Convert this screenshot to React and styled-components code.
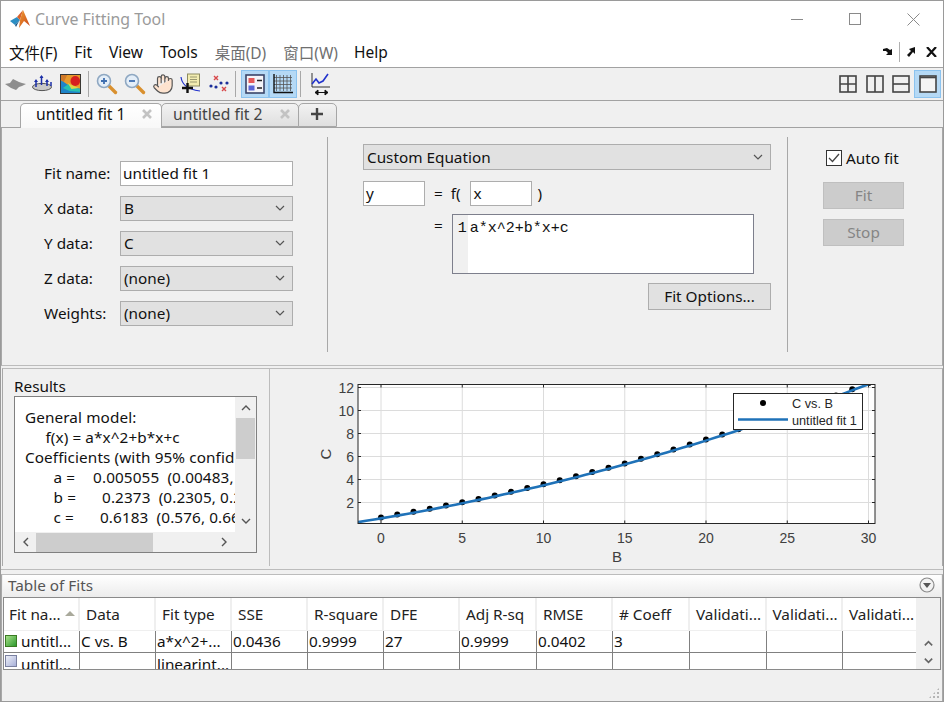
import React from "react";
import styled, { createGlobalStyle } from "styled-components";
import { Hand } from "lucide-react";

const Global = createGlobalStyle`
  * { box-sizing: border-box; }
  html, body { margin: 0; padding: 0; background: #f0f0f0; }
  body { font-family: "Noto Sans", "Noto Sans CJK SC", sans-serif; font-size: 15.3px; color: #111; }
`;

const Window = styled.div`
  width: 944px; height: 702px; overflow: hidden; display: flex; flex-direction: column;
  border: 1px solid #9a9a9a; background: #f0f0f0;
`;
const TitleBar = styled.div`
  height: 36px; flex: none; background: #fff; display: flex; align-items: center; padding-left: 9px; color: #9a9a9a; font-size: 15.9px;
`;
const TitleText = styled.span` margin-left: 4px; `;
const WinControls = styled.div`
  margin-left: auto; display: flex; align-items: center; gap: 45px; padding-right: 23px;
`;
const MenuBar = styled.div`
  height: 30px; flex: none; background: #fff; display: flex; align-items: center; padding: 0 0 0 8px; font-size: 15.5px; color: #111;
`;
const MenuItem = styled.span`
  margin-right: ${p => p.$gap}px; color: ${p => (p.$dim ? "#6f6f6f" : "#111")};
`;
const DockTools = styled.div` margin-left: auto; display: flex; align-items: center; padding-right: 6px; `;
const DockSep = styled.span` width: 1px; height: 20px; background: #b0b0b0; margin: 0 7px 0 5px; `;
const Toolbar = styled.div`
  height: 34px; flex: none; display: flex; align-items: center; padding: 0 2px 0 3px;
  border-top: 1px solid #a2a2a2; border-bottom: 1px solid #a2a2a2; background: #f0f0f0;
`;
const ToolIcon = styled.span`
  width: ${p => p.$w || 28}px; height: 28px; display: flex; align-items: center; justify-content: center; flex: none;
  background: ${p => (p.$on ? "#b5d9f5" : "transparent")};
  border: 1px solid ${p => (p.$on ? "#8cc3ef" : "transparent")};
`;
const ToolSep = styled.span` width: 1px; height: 26px; background: #a8a8a8; margin: 0 ${p => p.$r}px 0 ${p => p.$l}px; flex: none; `;
const RightTools = styled.div` margin-left: auto; display: flex; align-items: center; `;
const TabRow = styled.div`
  height: 27px; flex: none; display: flex; align-items: flex-end; padding-left: 4px; border-bottom: 1px solid #a2a2a2; background: #f0f0f0;
`;
const Grip = styled.span`
  width: 4px; height: 18px; margin: 0 12px 1px 0;
  background-image: radial-gradient(#a0a0a0 45%, transparent 50%); background-size: 2px 2px;
`;
const Tab = styled.div`
  height: ${p => (p.$active ? 25 : 24)}px; width: ${p => p.$w}px; flex: none; display: flex; align-items: center; padding: 0 0 ${p => (p.$active ? 4 : 3)}px ${p => p.$pad}px;
  border: 1px solid #a6a6a6; border-bottom: ${p => (p.$active ? "none" : "1px solid #a6a6a6")}; border-radius: 5px 5px 0 0;
  margin-left: -1px; font-size: 15.7px; color: ${p => (p.$active ? "#111" : "#444")};
  background: ${p => (p.$active ? "linear-gradient(#fff, #f8f8f8)" : "linear-gradient(#f2f2f2, #dfdfdf)")};
  margin-bottom: ${p => (p.$active ? -1 : 0)}px; z-index: ${p => (p.$active ? 1 : 0)};
`;
const TabClose = styled.span` margin-left: auto; margin-right: ${p => p.$r}px; display: flex; `;

const TopPanel = styled.div`
  height: 238px; flex: none; display: flex; padding-left: 1px; border-left: 1px solid #a8a8a8; border-right: 1px solid #a8a8a8;
  border-bottom: 1px solid #bcbcbc;
`;
const FormCol = styled.div`
  width: 324px; padding: 33px 0 0 41px; display: grid; grid-template-columns: 76px 173px; grid-auto-rows: 25px; row-gap: 10px; align-content: start; align-items: center;
`;
const FieldLabel = styled.span` padding-bottom: 2px; `;
const Divider = styled.div` width: 1px; background: #a8a8a8; margin: 9px 0 13px; flex: none; `;
const EditField = styled.div`
  height: 25px; background: #fff; border: 1px solid #adadad; padding: 0 0 2px ${p => p.$pad || 2}px; margin-left: ${p => p.$l || 0}px; display: flex; align-items: center; width: ${p => (p.$w ? p.$w + "px" : "auto")};
`;
const Combo = styled.div`
  height: ${p => p.$h || 25}px; background: #e1e1e1; border: 1px solid #adadad; padding: 0 6px ${p => (p.$h ? 1 : 2)}px 3px; display: flex; align-items: center; justify-content: space-between;
`;
const EqCol = styled.div`
  width: 459px; padding: 16px 16px 0 35px; display: flex; flex-direction: column;
`;
const EqRow = styled.div` display: flex; align-items: center; margin-top: 11px; height: 25px; `;
const EqSym = styled.span` margin-left: ${p => p.$l}px; padding-bottom: 1px; `;
const EqBody = styled.div` display: flex; margin-top: 8px; padding-left: 71px; `;
const EqEqual = styled.span` height: 24px; line-height: 22px; `;
const CodeBox = styled.div`
  margin-left: 9px; width: 302px; height: 60px; background: #fff; border: 1px solid #7d7f8c; display: flex;
  font-family: "Liberation Mono", monospace; font-size: 15px; line-height: 28px;
`;
const Gutter = styled.span` width: 15px; background: #f0f0f0; text-align: right; padding-right: 1px; `;
const CodeText = styled.span` padding-left: 2px; `;
const PushButton = styled.div`
  height: 27px; width: ${p => p.$w}px; display: flex; align-items: center; justify-content: center; padding-bottom: 2px;
  background: ${p => (p.$off ? "#cccccc" : "#e1e1e1")}; border: 1px solid ${p => (p.$off ? "#bfbfbf" : "#adadad")}; color: ${p => (p.$off ? "#858585" : "#111")};
`;
const FitOptionsRow = styled.div` display: flex; justify-content: flex-end; margin-top: 9px; `;
const AutoCol = styled.div` flex: 1; padding: 20px 0 0 35px; display: flex; flex-direction: column; `;
const AutoFit = styled.label` display: flex; align-items: center; gap: 4px; height: 20px; margin: 0 0 14px 3px; `;
const CheckBox = styled.span` width: 16px; height: 16px; background: #fff; border: 1px solid #333; display: flex; align-items: center; justify-content: center; `;
const StopWrap = styled.div` margin-top: 10px; `;

const MiddleRow = styled.div`
  height: 204px; flex: none; display: flex; padding: 2px 0 3px 0; border-bottom: 1px solid #bcbcbc;
`;
const ResultsPanel = styled.div`
  width: 268px; flex: none; margin-left: 1px; border-left: 1px solid #a8a8a8; border-top: 1px solid #bcbcbc; border-right: 1px solid #bcbcbc; padding: 8px 0 0 11px;
`;
const ResultsTitle = styled.div` height: 19px; line-height: 19px; `;
const ResultsBox = styled.div`
  width: 243px; height: 157px; border: 1px solid #808080; display: grid; grid-template-columns: 220px 21px; grid-template-rows: 135px 20px; background: #f0f0f0;
`;
const ResultsText = styled.div`
  background: #fff; overflow: hidden; white-space: pre; padding: 10px 0 0 10px; line-height: 20px; letter-spacing: .1px;
`;
const VScroll = styled.div` display: flex; flex-direction: column; align-items: center; background: #f0f0f0; padding-top: 5px; `;
const VThumb = styled.div` width: 19px; height: 41px; background: #cdcdcd; margin: 4px 0 auto 0; `;
const ScrollArrowEnd = styled.div` height: 17px; margin-bottom: 3px; display: flex; align-items: center; `;
const HScroll = styled.div` grid-column: 1 / 3; display: flex; align-items: center; background: #f0f0f0; padding-left: 5px; `;
const HThumb = styled.div` width: 117px; height: 19px; background: #cdcdcd; margin-left: 4px; `;
const HEnd = styled.div` margin-left: 65px; display: flex; `;
const PlotPanel = styled.div`
  flex: 1; padding-left: 1px; border-top: 1px solid #bcbcbc; border-right: 1px solid #a8a8a8;
`;

const TablePanel = styled.div`
  flex: 1; display: flex; flex-direction: column; margin-top: 4px; padding: 0 1px; border-left: 1px solid #a8a8a8; border-right: 1px solid #a8a8a8; border-top: 1px solid #bcbcbc; position: relative;
`;
const TableTitle = styled.div`
  height: 22px; flex: none; padding: 0 6px 3px 5px; display: flex; align-items: center; justify-content: space-between; color: #555;
  background: linear-gradient(#ffffff, #ececec);
`;
const TableFrame = styled.div`
  height: 73px; display: grid; grid-template-columns: 1fr 24px; border: 1px solid #8a8a8a; background: #fff; flex: none;
`;
const FitsGrid = styled.div`
  display: grid; grid-template-columns: 76px 76px 76px 76px 76px 76px 77px 76px 77px 76.5px 76.5px 76px; grid-template-rows: 33px 22px 16px; overflow: hidden;
`;
const Head = styled.div`
  background: #fff; border-right: 2px solid #efefef; border-bottom: 1px solid #efefef; display: flex; align-items: center; padding: 0 0 1px ${p => p.$pad}px; white-space: nowrap; overflow: hidden; color: #222;
`;
const SortMark = styled.span`
  margin-left: 4px; width: 0; height: 0; border-left: 5px solid transparent; border-right: 5px solid transparent; border-bottom: 5px solid #a9a99b;
`;
const Cell = styled.div`
  border-right: 1px solid #808080; border-bottom: ${p => (p.$last ? "none" : "1px solid #808080")}; display: flex; align-items: ${p => (p.$last ? "flex-start" : "center")}; padding: ${p => (p.$last ? "1px 0 0 1px" : "0 0 1px 1px")}; white-space: nowrap; overflow: hidden; line-height: 20px;
`;
const Swatch = styled.span`
  width: 12px; height: 12px; margin: ${p => (p.$top ? "1px" : "0")} 4px 0 0; flex: none; border: 1px solid ${p => p.$border};
  background: ${p => p.$fill};
`;
const TableScroll = styled.div`
  background: #f0f0f0; display: flex; flex-direction: column; justify-content: flex-end; align-items: center; gap: 6px; padding-bottom: 3px; border-left: 1px solid #f0f0f0;
`;
const GripCorner = styled.div`
  position: absolute; right: 2px; bottom: 2px; width: 12px; height: 12px;
  background-image: radial-gradient(#b4b4b4 50%, transparent 55%); background-size: 4px 4px;
  clip-path: polygon(100% 0, 100% 100%, 0 100%);
`;

const Chevron = ({ dir = "down", size = 12, color = "#555", w = 1.2 }) => {
  const d = { down: "M2 4l4 4 4-4", up: "M2 8l4-4 4 4", left: "M8 2L4 6l4 4", right: "M4 2l4 4-4 4" }[dir];
  return <svg width={size} height={size} viewBox="0 0 12 12"><path d={d} fill="none" stroke={color} strokeWidth={w} /></svg>;
};

const Logo = () => (
  <svg width="21" height="21" viewBox="0 0 21 21">
    <defs>
      <linearGradient id="lg1" x1="0" y1="0" x2="1" y2="1"><stop offset="0" stopColor="#f0a030" /><stop offset="1" stopColor="#c8401a" /></linearGradient>
    </defs>
    <polygon points="0,12 7,8 10,11 5,16" fill="#2d8fc4" />
    <polygon points="5,16 10,11 8,14 6,18" fill="#17507f" />
    <polygon points="7,8 13,1 10,11" fill="#d9622b" />
    <polygon points="13,1 20,17 14,12 9,19 10,11" fill="url(#lg1)" />
  </svg>
);

const GrayShape = () => (
  <svg width="22" height="14" viewBox="0 0 22 14"><path d="M0 7l5-1 3-4 6 3 3 1 4 1-4 2-3 1-3 3-5-2-3-2z" fill="#8e8e8e" /></svg>
);
const Cursor3D = () => (
  <svg width="22" height="20" viewBox="0 0 22 20">
    <ellipse cx="11" cy="13" rx="9.5" ry="3.6" fill="#c8c8c8" stroke="#555" />
    <path d="M10.5 2v9M5 7v6M16 6v6M20 8v4" stroke="#1b2fa8" strokeWidth="1.5" />
    <path d="M8.5 4l2-3 2 3zM3 8l2-3 2 3zM14 8l2-3 2 3z" fill="#1b2fa8" />
  </svg>
);
const SurfaceMap = () => (
  <svg width="21" height="20" viewBox="0 0 22 20" preserveAspectRatio="none">
    <rect width="22" height="20" fill="#e89a2c" />
    <polygon points="0,0 8,0 4,8 0,6" fill="#d07828" />
    <polygon points="0,6 4,8 10,12 22,15 22,20 0,20" fill="#1e84c8" />
    <polygon points="3,14 9,10 16,14 22,15 22,18 10,17" fill="#28c0b0" />
    <polygon points="8,9 12,11 20,14 12,15" fill="#d8d848" />
    <circle cx="16" cy="7" r="5" fill="#d62020" />
    <rect x=".5" y=".5" width="21" height="19" fill="none" stroke="#333" />
  </svg>
);
const Magnifier = ({ minus }) => (
  <svg width="22" height="22" viewBox="0 0 22 22">
    <path d="M12.5 12.5l7 7" stroke="#d9902f" strokeWidth="3.4" strokeLinecap="round" />
    <circle cx="8" cy="8" r="6.5" fill="#e4eef8" stroke="#8fa8c2" strokeWidth="1.6" />
    <path d={minus ? "M5 8h6" : "M5 8h6M8 5v6"} stroke="#3f6fb0" strokeWidth="1.8" />
  </svg>
);
const DataTip = () => (
  <svg width="22" height="22" viewBox="0 0 22 22">
    <path d="M1 4c1 7 5 12 19 14" fill="none" stroke="#2233cc" strokeWidth="1.2" />
    <rect x="7.5" y="1" width="12" height="12" fill="#f2ecb0" stroke="#8d8b60" />
    <path d="M10 4h7M10 6.500h7M10 9h7" stroke="#9a9870" />
    <path d="M2 15h11M7.500 10v10" stroke="#111" strokeWidth="2.4" />
  </svg>
);
const Points = () => (
  <svg width="20" height="18" viewBox="0 0 20 18">
    <path d="M5 1l4 4M9 1L5 5M13 12l4 4M17 12l-4 4" stroke="#d8484a" strokeWidth="1.4" />
    <circle cx="2" cy="11" r="1.6" fill="#1c2f9a" /><circle cx="7" cy="12" r="1.6" fill="#1c2f9a" />
    <circle cx="12" cy="8" r="1.6" fill="#1c2f9a" /><circle cx="18" cy="8" r="1.6" fill="#1c2f9a" />
  </svg>
);
const LegendIcon = () => (
  <svg width="20" height="20" viewBox="0 0 20 20">
    <rect x="1" y="1" width="18" height="18" fill="#f4f4f8" stroke="#3a4468" strokeWidth="1.6" />
    <rect x="3.500" y="4" width="6" height="5" fill="#e45a5a" /><rect x="3.500" y="11.500" width="6" height="5" fill="#5a66d8" />
    <path d="M12 6.500h5M12 14h5" stroke="#222" strokeWidth="1.4" />
  </svg>
);
const GridIcon = () => (
  <svg width="20" height="20" viewBox="0 0 20 20">
    <path d="M3.500 1v16M7 1v16M10.500 1v16M14 1v16M17.500 1v16M1 3.500h18M1 7h18M1 10.500h18M1 14h18" stroke="#555" strokeWidth=".8" />
    <path d="M1 0v18.500h19" fill="none" stroke="#111" strokeWidth="1.4" />
  </svg>
);
const PanIcon = () => (
  <svg width="24" height="24" viewBox="0 0 24 24">
    <path d="M3 1v14h18" fill="none" stroke="#333" />
    <path d="M3 12l4-5 3 4 4-2 5-7" fill="none" stroke="#2233cc" strokeWidth="1.6" />
    <path d="M6 20.500h13M6 20.500l3-2.500v5zM19 20.500l-3-2.500v5z" fill="#111" stroke="#111" />
  </svg>
);
const LayoutIcon = ({ d, h = false }) => (
  <svg width="18" height="18" viewBox="0 0 18 18">
    <rect x="1" y="1" width="16" height="16" fill={h ? "#f4f4f4" : "none"} stroke="#444" strokeWidth="1.6" />
    <path d={d} stroke="#444" strokeWidth="1.6" fill="none" />
  </svg>
);
const TabX = () => (
  <svg width="12" height="12" viewBox="0 0 12 12"><path d="M2 2l8 8M10 2l-8 8" stroke="#c3c3c3" strokeWidth="2.6" /></svg>
);
const Plus = () => (
  <svg width="14" height="14" viewBox="0 0 14 14"><path d="M1 7h12M7 1v12" stroke="#444" strokeWidth="2.4" /></svg>
);

const f = x => 0.005055 * x * x + 0.2373 * x + 0.6183;
const PX = x => 381 + 16.25 * x - 271;
const PY = y => 525.5 - 11.5 * y - 369;

const Chart = () => {
  const xs = Array.from({ length: 31 }, (_, i) => i);
  const curve = Array.from({ length: 64 }, (_, i) => -1.415 + i * 0.5).map(x => `${PX(x)},${PY(f(x))}`).join(" ");
  const L = PX(-1.415), R = 875 - 271, T = 384.5 - 369, B = 523.5 - 369;
  const gx = [0, 5, 10, 15, 20, 25, 30];
  const gy = [2, 4, 6, 8, 10, 12];
  return (
    <svg width="670" height="196" viewBox="0 0 670 196" fontFamily="Liberation Sans, sans-serif" fontSize="14" fill="#404040">
      <defs><clipPath id="ax"><rect x={L} y={T} width={R - L} height={B - T} /></clipPath></defs>
      <rect x={L} y={T} width={R - L} height={B - T} fill="#fff" />
      {gx.map(v => <line key={v} x1={PX(v)} x2={PX(v)} y1={T} y2={B} stroke="#dcdcdc" />)}
      {gy.map(v => <line key={v} x1={L} x2={R} y1={PY(v)} y2={PY(v)} stroke="#dcdcdc" />)}
      <g clipPath="url(#ax)">
        {xs.map(x => <circle key={x} cx={PX(x)} cy={PY(f(x)) - 1} r="3" fill="#000" />)}
        <polyline points={curve} fill="none" stroke="#1f72b8" strokeWidth="2.6" />
      </g>
      <rect x={L} y={T} width={R - L} height={B - T} fill="none" stroke="#262626" />
      {gx.map(v => <path key={v} d={`M${PX(v)} ${B}v-3M${PX(v)} ${T}v3`} stroke="#262626" />)}
      {gy.map(v => <path key={v} d={`M${L} ${PY(v)}h3M${R} ${PY(v)}h-3`} stroke="#262626" />)}
      {gx.map(v => <text key={v} x={PX(v)} y={174} textAnchor="middle">{v}</text>)}
      {gy.map(v => <text key={v} x={L - 4} y={PY(v) + 5} textAnchor="end">{v}</text>)}
      <text x={617 - 271} y={193} textAnchor="middle" fontSize="15">B</text>
      <text transform={`translate(${331 - 271},${454 - 369}) rotate(-90)`} textAnchor="middle" fontSize="15">C</text>
      <rect x={733.5 - 271} y={393.5 - 369} width="129" height="36" fill="#fff" stroke="#262626" />
      <circle cx={763 - 271} cy={403 - 369} r="3" fill="#000" />
      <line x1={738 - 271} x2={788 - 271} y1={419.5 - 369} y2={419.5 - 369} stroke="#1f72b8" strokeWidth="2.4" />
      <text x={792 - 271} y={408 - 369} fontSize="12.7" fill="#262626">C vs. B</text>
      <text x={792 - 271} y={425 - 369} fontSize="12.7" fill="#262626">untitled fit 1</text>
    </svg>
  );
};

const headers = ["Fit na...", "Data", "Fit type", "SSE", "R-square", "DFE", "Adj R-sq", "RMSE", "# Coeff", "Validati...", "Validati...", "Validati..."];
const row1 = ["C vs. B", "a*x^2+...", "0.0436", "0.9999", "27", "0.9999", "0.0402", "3", "", "", ""];
const row2 = ["", "linearint...", "", "", "", "", "", "", "", "", ""];

export default function App() {
  return (
    <Window>
      <Global />
      <TitleBar>
        <Logo />
        <TitleText>Curve Fitting Tool</TitleText>
        <WinControls>
          <svg width="13" height="13" viewBox="0 0 13 13"><path d="M0 6.500h12" stroke="#8a8a8a" /></svg>
          <svg width="13" height="13" viewBox="0 0 13 13"><rect x=".5" y=".5" width="11" height="11" fill="none" stroke="#8a8a8a" /></svg>
          <svg width="13" height="13" viewBox="0 0 13 13"><path d="M.5.5l12 12M12.500.5l-12 12" stroke="#8a8a8a" /></svg>
        </WinControls>
      </TitleBar>
      <MenuBar>
        <MenuItem $gap={17}>文件(F)</MenuItem>
        <MenuItem $gap={17}>Fit</MenuItem>
        <MenuItem $gap={17}>View</MenuItem>
        <MenuItem $gap={17}>Tools</MenuItem>
        <MenuItem $gap={17} $dim>桌面(D)</MenuItem>
        <MenuItem $gap={16} $dim>窗口(W)</MenuItem>
        <MenuItem $gap={0}>Help</MenuItem>
        <DockTools>
          <svg width="11" height="10" viewBox="0 0 11 10"><path d="M0 2l4-1 3 2 2-1v6H3l2-2-2-2-3 0z" fill="#111" /></svg>
          <DockSep />
          <svg width="9" height="10" viewBox="0 0 9 10"><path d="M8 0v7l-2-2-4 5-2-2 4-4-2-2z" fill="#111" /></svg>
          <svg style={{ marginLeft: 10 }} width="11" height="10" viewBox="0 0 11 10"><path d="M1 0l9 10M10 0L1 10" stroke="#111" strokeWidth="2.2" /></svg>
        </DockTools>
      </MenuBar>
      <Toolbar>
        <ToolIcon $w={24}><GrayShape /></ToolIcon>
        <ToolIcon><Cursor3D /></ToolIcon>
        <ToolIcon><SurfaceMap /></ToolIcon>
        <ToolSep $l={4} $r={4} />
        <ToolIcon><Magnifier /></ToolIcon>
        <ToolIcon><Magnifier minus /></ToolIcon>
        <ToolIcon><Hand size={22} strokeWidth={1.3} color="#555" fill="#fde3cf" /></ToolIcon>
        <ToolIcon><DataTip /></ToolIcon>
        <ToolIcon><Points /></ToolIcon>
        <ToolSep $l={2} $r={5} />
        <ToolIcon $on><LegendIcon /></ToolIcon>
        <ToolIcon $on><GridIcon /></ToolIcon>
        <ToolSep $l={3} $r={6} />
        <ToolIcon><PanIcon /></ToolIcon>
        <RightTools>
          <ToolIcon $w={26}><LayoutIcon d="M9 1v16M1 9h16" /></ToolIcon>
          <ToolIcon $w={27}><LayoutIcon d="M9 1v16" /></ToolIcon>
          <ToolIcon $w={26}><LayoutIcon d="M1 9h16" /></ToolIcon>
          <ToolIcon $w={27} $on><LayoutIcon d="M1 2.500h16" h /></ToolIcon>
        </RightTools>
      </Toolbar>
      <TabRow>
        <Grip />
        <Tab $active $w={142} $pad={15}>untitled fit 1<TabClose $r={8}><TabX /></TabClose></Tab>
        <Tab $w={138} $pad={11}>untitled fit 2<TabClose $r={7}><TabX /></TabClose></Tab>
        <Tab $w={39} $pad={11}><Plus /></Tab>
      </TabRow>
      <TopPanel>
        <FormCol>
          <FieldLabel>Fit name:</FieldLabel><EditField>untitled fit 1</EditField>
          <FieldLabel>X data:</FieldLabel><Combo>B<Chevron /></Combo>
          <FieldLabel>Y data:</FieldLabel><Combo>C<Chevron /></Combo>
          <FieldLabel>Z data:</FieldLabel><Combo>(none)<Chevron /></Combo>
          <FieldLabel>Weights:</FieldLabel><Combo>(none)<Chevron /></Combo>
        </FormCol>
        <Divider />
        <EqCol>
          <Combo $h={26}>Custom Equation<Chevron /></Combo>
          <EqRow>
            <EditField $w={62}>y</EditField>
            <EqSym $l={9}>=</EqSym>
            <EqSym $l={8}>f(</EqSym>
            <EditField $w={62} $pad={3} $l={9}>x</EditField>
            <EqSym $l={6}>)</EqSym>
          </EqRow>
          <EqBody>
            <EqEqual>=</EqEqual>
            <CodeBox><Gutter>1</Gutter><CodeText>a*x^2+b*x+c</CodeText></CodeBox>
          </EqBody>
          <FitOptionsRow><PushButton $w={123}>Fit Options...</PushButton></FitOptionsRow>
        </EqCol>
        <Divider />
        <AutoCol>
          <AutoFit>
            <CheckBox><svg width="12" height="10" viewBox="0 0 12 10"><path d="M1 5l3.500 3.500L11 1" fill="none" stroke="#444" strokeWidth="1.3" /></svg></CheckBox>
            Auto fit
          </AutoFit>
          <PushButton $off $w={81}>Fit</PushButton>
          <StopWrap><PushButton $off $w={81}>Stop</PushButton></StopWrap>
        </AutoCol>
      </TopPanel>
      <MiddleRow>
        <ResultsPanel>
          <ResultsTitle>Results</ResultsTitle>
          <ResultsBox>
            <ResultsText>{`General model:
     f(x) = a*x^2+b*x+c
Coefficients (with 95% confidence bounds)
       a =    \u200A0.005055  (0.00483, 0.00528)
       b =      \u200A0.2373  (0.2305, 0.2441)
       c =      \u200A0.6183  (0.576, 0.6606)`}</ResultsText>
            <VScroll>
              <Chevron dir="up" size={12} w={1.4} />
              <VThumb />
              <ScrollArrowEnd><Chevron dir="down" size={12} w={1.4} /></ScrollArrowEnd>
            </VScroll>
            <HScroll>
              <Chevron dir="left" size={12} w={1.4} />
              <HThumb />
              <HEnd><Chevron dir="right" size={12} w={1.4} /></HEnd>
            </HScroll>
          </ResultsBox>
        </ResultsPanel>
        <PlotPanel><Chart /></PlotPanel>
      </MiddleRow>
      <TablePanel>
        <TableTitle>
          Table of Fits
          <svg width="16" height="16" viewBox="0 0 16 16"><circle cx="8" cy="8" r="7" fill="#f2f2f2" stroke="#8a8a8a" strokeWidth="1.2" /><path d="M4 6h8l-4 5z" fill="#555" /></svg>
        </TableTitle>
        <TableFrame>
          <FitsGrid>
            {headers.map((h, i) => (
              <Head key={i} $pad={i === 0 ? 5 : 6}>{h}{i === 0 && <SortMark />}</Head>
            ))}
            <Cell><Swatch $border="#3a7a22" $fill="linear-gradient(135deg,#a8e08a,#2e9a2e)" />untitl...</Cell>
            {row1.map((c, i) => <Cell key={i}>{c}</Cell>)}
            <Cell $last><Swatch $top $border="#7a80a0" $fill="linear-gradient(135deg,#eef0f8,#a8b0d8)" />untitl...</Cell>
            {row2.map((c, i) => <Cell $last key={i}>{c}</Cell>)}
          </FitsGrid>
          <TableScroll>
            <Chevron dir="up" size={11} w={1.8} color="#666" />
            <Chevron dir="down" size={11} w={1.8} color="#666" />
          </TableScroll>
        </TableFrame>
        <GripCorner />
      </TablePanel>
    </Window>
  );
}
